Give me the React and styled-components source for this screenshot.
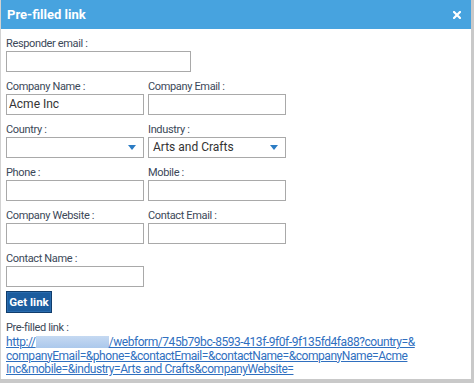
import React from "react";
import styled, { createGlobalStyle } from "styled-components";

const GlobalStyle = createGlobalStyle`
    body {
        margin: 0;
        background: #c9c9c9;
        font-family: Roboto, "Liberation Sans", sans-serif;
    }
`

const Dialog = styled.div`
    width: 471px;
    height: 379px;
    box-sizing: border-box;
    background: #fff;
    border-left: 1px solid #d2d2d2;
    box-shadow: 0 1px 0 #9a9a9a;
    overflow: hidden;
`

const Header = styled.div`
    height: 29px;
    background: #47a3df;
    display: flex;
    align-items: center;
    justify-content: space-between;
    padding: 0 10px 0 6px;
`

const Title = styled.h3`
    margin: 0;
    font-size: 13px;
    font-weight: 700;
    color: #fff;
`

const Close = styled.svg`
    width: 8px;
    height: 8px;
    display: block;
`

const Body = styled.div`
    padding: 7px 5px 4px 5px;
`

const Field = styled.div`
    margin-bottom: ${props => props.$last ? 4 : 7}px;
`

const Label = styled.div`
    font-size: 11px;
    letter-spacing: -0.35px;
    line-height: 15px;
    color: #3b4858;
`

const Row = styled.div`
    display: grid;
    grid-template-columns: 138px 138px;
    column-gap: 4px;
`

const TextInput = styled.div`
    width: ${props => props.$w}px;
    height: 21px;
    box-sizing: border-box;
    border: 1px solid #a9a9a9;
    padding: 0 2px;
    font-size: 12px;
    line-height: 19px;
    color: #333;
`

const SelectBox = styled(TextInput)`
    display: flex;
    align-items: center;
    justify-content: space-between;
    padding: 0 7px 0 4px;
`

const Arrow = styled.svg`
    width: 8px;
    height: 5px;
    display: block;
`

const Button = styled.button`
    width: 46px;
    height: 22px;
    padding: 0;
    background: #1b5c9e;
    border: 1px solid #103d6c;
    box-shadow: inset 0 0 0 1px #2a6cae;
    color: #fff;
    font-family: inherit;
    font-size: 11.5px;
    font-weight: 700;
    display: block;
`

const ResultLabel = styled(Label)`
    margin-top: 8px;
    line-height: 14px;
`

const Link = styled.a`
    display: block;
    margin-top: 1px;
    color: #2f6fbf;
    font-size: 12px;
    letter-spacing: -0.44px;
    line-height: 13.5px;
    text-decoration: underline;
`

const Redacted = styled.span`
    display: inline-block;
    width: 73px;
    height: 12px;
    vertical-align: -2px;
    background: linear-gradient(#c5d9f2, #abc8ec);
`

const Input = ({ label, width = 138, value, last }) => (
    <Field $last={last}>
        <Label>{label}</Label>
        <TextInput $w={width}>{value}</TextInput>
    </Field>
)

const Select = ({ label, value }) => (
    <Field>
        <Label>{label}</Label>
        <SelectBox $w={138}>
            <span>{value}</span>
            <Arrow viewBox="0 0 8 5"><path d="M0 0 L8 0 L4 5 Z" fill="#2b7cc4" /></Arrow>
        </SelectBox>
    </Field>
)

export default function App() {
    return (
        <>
            <GlobalStyle />
            <Dialog>
                <Header>
                    <Title>Pre-filled link</Title>
                    <Close viewBox="0 0 8 8">
                        <path d="M1 1 L7 7 M7 1 L1 7" stroke="#fff" strokeWidth="2.2" strokeLinecap="square" />
                    </Close>
                </Header>
                <Body>
                    <Input label="Responder email :" width={185} />
                    <Row>
                        <Input label="Company Name :" value="Acme Inc" />
                        <Input label="Company Email :" />
                        <Select label="Country :" />
                        <Select label="Industry :" value="Arts and Crafts" />
                        <Input label="Phone :" />
                        <Input label="Mobile :" />
                        <Input label="Company Website :" />
                        <Input label="Contact Email :" />
                    </Row>
                    <Input label="Contact Name :" last />
                    <Button>Get link</Button>
                    <ResultLabel>Pre-filled link :</ResultLabel>
                    <Link href="#">
                        http://<Redacted />/webform/745b79bc-8593-413f-9f0f-9f135fd4fa88?country=&amp;<br />
                        companyEmail=&amp;phone=&amp;contactEmail=&amp;contactName=&amp;companyName=Acme<br />
                        Inc&amp;mobile=&amp;industry=Arts and Crafts&amp;companyWebsite=
                    </Link>
                </Body>
            </Dialog>
        </>
    )
}
